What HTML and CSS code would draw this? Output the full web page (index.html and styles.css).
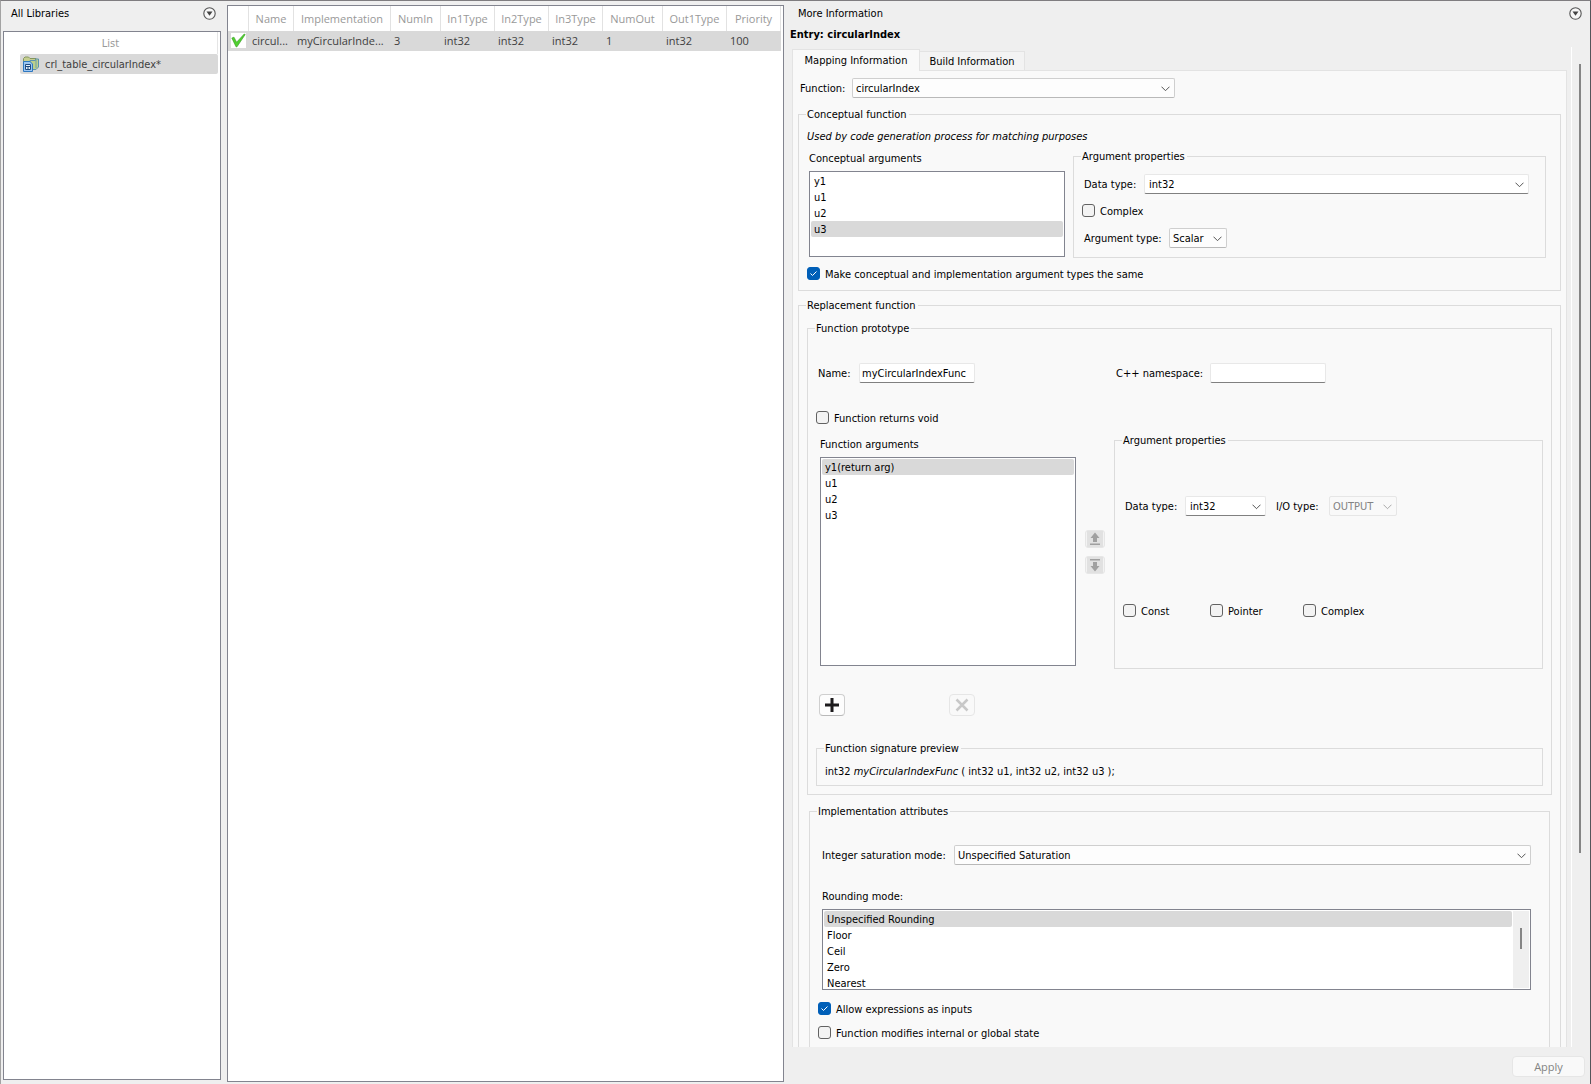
FILE: index.html
```html
<!DOCTYPE html>
<html lang="en">
<head>
<meta charset="utf-8">
<meta name="viewport" content="width=device-width, initial-scale=1">
<title>Code Replacement Tool</title>
<link rel="stylesheet" href="styles.css">
</head>
<body>
<div class="window">
  <section class="libraries">
    <header class="pane-title">
      <h2>All Libraries</h2>
      <button class="menu-button" type="button" aria-label="Libraries menu">
        <svg width="13" height="13" viewBox="0 0 13 13"><circle cx="6.5" cy="6.5" r="5.7" fill="#f7f7f7" stroke="#555" stroke-width="1.1"/><path d="M3.5 4.5h6L6.5 8.7z" fill="#444"/></svg>
      </button>
    </header>
    <div class="tree">
      <div class="tree-header">List</div>
      <div class="tree-item">
        <svg width="16" height="16" viewBox="0 0 16 16">
          <path d="M.5 6V2.500L2 1h3.500L7 2.500h6V12H6z" fill="#c6cf90" stroke="#84965e"/>
          <path d="M7 4.500h5.500V3h3v8l-2.500 2.500H8z" fill="#bcd08c" stroke="#5c93ad"/>
          <path d="M13 4v8" stroke="#6fa0a8"/>
          <path d="M.5 5.500h6.500L9.500 8v7.500H.5z" fill="#9cc6f2" stroke="#2f78c0"/>
          <path d="M2.500 8.500h5v5h-5zM2.500 10.500h5M5 10.500v3" fill="#e4effb" stroke="#1f4a80"/>
        </svg>
        <span>crl_table_circularIndex*</span>
      </div>
    </div>
  </section>

  <section class="entries">
    <table>
      <colgroup><col class="c-icon"><col class="c-name"><col class="c-impl"><col class="c-numin"><col class="c-type"><col class="c-type"><col class="c-type"><col class="c-out"><col class="c-out1"><col class="c-type"></colgroup>
      <thead><tr><th></th><th>Name</th><th>Implementation</th><th>NumIn</th><th>In1Type</th><th>In2Type</th><th>In3Type</th><th>NumOut</th><th>Out1Type</th><th>Priority</th></tr></thead>
      <tbody><tr>
        <td class="status"><svg width="15" height="15" viewBox="0 0 15 15"><rect width="15" height="15" fill="#fff"/><path d="M.8 5L3 4.200l2.600 5L13.200 1l1 .5L6 13.800H5z" fill="#4fd02f" stroke="#359a22" stroke-width=".6"/></svg></td>
        <td>circul...</td><td>myCircularInde...</td><td>3</td><td>int32</td><td>int32</td><td>int32</td><td>1</td><td>int32</td><td>100</td>
      </tr></tbody>
    </table>
  </section>

  <section class="details">
    <header class="pane-title">
      <h2>More Information</h2>
      <button class="menu-button" type="button" aria-label="Information menu">
        <svg width="13" height="13" viewBox="0 0 13 13"><circle cx="6.5" cy="6.5" r="5.7" fill="#f7f7f7" stroke="#555" stroke-width="1.1"/><path d="M3.5 4.5h6L6.5 8.7z" fill="#444"/></svg>
      </button>
    </header>
    <h1>Entry: circularIndex</h1>

    <div class="scroll">
      <div class="scroll-content">
        <div class="tabs" role="tablist">
          <button class="tab active" type="button" role="tab" aria-selected="true">Mapping Information</button>
          <button class="tab" type="button" role="tab" aria-selected="false">Build Information</button>
        </div>
        <form class="panel">
          <div class="row function-row">
            <label for="fn">Function:</label>
            <select id="fn"><option>circularIndex</option></select>
          </div>

          <fieldset class="conceptual">
            <legend>Conceptual function</legend>
            <p class="hint">Used by code generation process for matching purposes</p>
            <div class="concept-grid">
              <div class="list-column">
                <label for="cargs">Conceptual arguments</label>
                <select id="cargs" class="list" size="5"><option>y1</option><option>u1</option><option>u2</option><option selected>u3</option></select>
              </div>
              <fieldset class="concept-props">
                <legend>Argument properties</legend>
                <div class="row"><label class="w-type" for="cdt">Data type:</label><select id="cdt" class="editable grow"><option>int32</option></select></div>
                <label class="check"><input type="checkbox">Complex</label>
                <div class="row"><label class="w-arg" for="cat">Argument type:</label><select id="cat" class="scalar"><option>Scalar</option></select></div>
              </fieldset>
            </div>
            <label class="check"><input type="checkbox" checked>Make conceptual and implementation argument types the same</label>
          </fieldset>

          <fieldset class="replacement">
            <legend>Replacement function</legend>
            <fieldset class="prototype">
              <legend>Function prototype</legend>
              <div class="names">
                <div class="row"><label class="w-name" for="nm">Name:</label><input id="nm" type="text" value="myCircularIndexFunc"></div>
                <div class="row"><label class="w-ns" for="ns">C++ namespace:</label><input id="ns" type="text"></div>
              </div>
              <label class="check"><input type="checkbox">Function returns void</label>
              <div class="args">
                <div class="list-column">
                  <label for="fargs">Function arguments</label>
                  <select id="fargs" class="list" size="12"><option selected>y1(return arg)</option><option>u1</option><option>u2</option><option>u3</option></select>
                </div>
                <div class="movers">
                  <button type="button" disabled aria-label="Move up"><svg width="16" height="16" viewBox="0 0 16 16"><rect width="16" height="16" fill="#e1e1e1"/><path d="M8 1.500L12.500 7H10v4H6V7H3.500zM3 12.500h10v1.500H3z" fill="#a0a0a0"/></svg></button>
                  <button type="button" disabled aria-label="Move down"><svg width="16" height="16" viewBox="0 0 16 16"><rect width="16" height="16" fill="#e1e1e1"/><path d="M8 14.500L3.500 9H6V5h4v4h2.500zM3 2h10v1.500H3z" fill="#a0a0a0"/></svg></button>
                </div>
                <fieldset class="arg-props">
                  <legend>Argument properties</legend>
                  <div class="row"><label class="w-type" for="adt">Data type:</label><select id="adt" class="editable type"><option>int32</option></select><label class="w-io" for="aio">I/O type:</label><select id="aio" class="io" disabled><option>OUTPUT</option></select></div>
                  <div class="flags">
                    <label class="check"><input type="checkbox">Const</label>
                    <label class="check"><input type="checkbox">Pointer</label>
                    <label class="check"><input type="checkbox">Complex</label>
                  </div>
                </fieldset>
              </div>
              <div class="edit-buttons">
                <button type="button" aria-label="Add argument"><svg width="14" height="14" viewBox="0 0 14 14"><path d="M7 0v14M0 7h14" stroke="#1c1a1c" stroke-width="3"/></svg></button>
                <button type="button" disabled aria-label="Remove argument"><svg width="14" height="14" viewBox="0 0 14 14"><path d="M1.500 1.500l11 11M12.500 1.500l-11 11" stroke="#c8c8c8" stroke-width="2.500"/></svg></button>
              </div>
              <fieldset class="signature">
                <legend>Function signature preview</legend>
                <p>int32 <i>myCircularIndexFunc</i> ( int32 u1, int32 u2, int32 u3 );</p>
              </fieldset>
            </fieldset>

            <fieldset class="attributes">
              <legend>Implementation attributes</legend>
              <div class="row"><label class="w-sat" for="sat">Integer saturation mode:</label><select id="sat" class="grow"><option>Unspecified Saturation</option></select></div>
              <div class="rounding">
                <label for="rnd">Rounding mode:</label>
                <div class="list-frame">
                  <select id="rnd" class="list" size="5"><option selected>Unspecified Rounding</option><option>Floor</option><option>Ceil</option><option>Zero</option><option>Nearest</option></select>
                  <div class="list-scroll"><div class="list-thumb"></div></div>
                </div>
              </div>
              <label class="check"><input type="checkbox" checked>Allow expressions as inputs</label>
              <label class="check"><input type="checkbox">Function modifies internal or global state</label>
            </fieldset>
          </fieldset>
        </form>
      </div>
      <div class="scrollbar"><div class="thumb"></div></div>
    </div>
    <footer><button class="apply" type="button" disabled>Apply</button></footer>
  </section>
</div>
</body>
</html>
```
FILE: styles.css
```css
* { box-sizing: border-box; }
body {
  margin: 0;
  background: #efefef;
  color: #000;
  font: 11px/16px "DejaVu Sans Condensed", "Noto Sans", sans-serif;
}
h1, h2, p { margin: 0; font-size: 11px; }
h2 { padding-top: 2px; font-weight: normal; }
svg { display: block; }
button, input, select { font: inherit; color: inherit; margin: 0; }
.window {
  display: flex;
  height: 100vh;
  min-height: 600px;
  border-top: 1px solid #7f7d80;
  border-left: 1px solid #a3a3a3;
  border-right: 1px solid #55555a;
}

.pane-title { display: flex; align-items: center; justify-content: space-between; height: 24px; }
.menu-button { padding: 0; border: 0; background: none; }

/* Library tree */
.libraries { width: 220px; flex: none; display: flex; flex-direction: column; padding: 0 0 4px 2px; }
.libraries .pane-title { padding: 0 5px 0 8px; }
.tree { flex: 1; margin-top: 6px; border: 1px solid #82848f; background: #fff; }
.tree-header { height: 22px; line-height: 24px; text-align: center; color: #999; border-right: 1px solid #e5e5e5; margin-right: 2px; }
.tree-item { display: flex; align-items: center; gap: 6px; height: 20px; margin: 0 2px 0 16px; padding-left: 3px; background: #d9d9d9; border-radius: 2px; color: #404040; }
.tree-item span { padding-top: 2px; }

/* Entry table */
.entries { width: 557px; flex: none; margin: 4px 0 2px 6px; border: 1px solid #82848f; background: #fff; font: 11px/18px "Open Sans", sans-serif; }
.entries table { width: 553px; table-layout: fixed; border-collapse: separate; border-spacing: 0; }
.entries th { height: 25px; padding: 1px 0 0; font-weight: normal; color: #999; border-right: 1px solid #e2e2e2; }
.entries td { height: 20px; padding: 0 0 1px 3px; background: #d9d9d9; color: #404040; white-space: nowrap; }
.c-icon { width: 21px; }
.c-name { width: 45px; }
.c-impl { width: 97px; }
.c-numin { width: 50px; }
.c-type { width: 54px; }
.c-out { width: 60px; }
.c-out1 { width: 64px; }

/* Details pane */
.details { flex: 1; min-width: 0; display: flex; flex-direction: column; }
.details .pane-title { padding: 0 8px 0 14px; }
h1 { margin-top: 2px; padding-left: 6px; font-weight: bold; }
.scroll { flex: 1; min-height: 0; display: flex; margin-top: 4px; overflow: hidden; }
.scroll-content { flex: 1; min-width: 0; padding: 2px 4px 0 8px; border-right: 1px solid #fff; }
.scrollbar { width: 18px; padding: 17px 0 0 7px; }
.thumb { width: 2px; height: calc(80% + 3px); background: #858585; }
footer { display: flex; justify-content: flex-end; padding: 9px 5px 7px; }
.apply { width: 73px; height: 21px; padding: 0; border: 1px solid #e6e6e6; border-radius: 4px; background: #f9f9f9; color: #838383; font: 11px/19px "Open Sans", sans-serif; }

.tabs { display: flex; align-items: flex-end; height: 21px; }
.tab { min-width: 105px; height: 19px; padding: 2px 0 0; border: 1px solid #e3e3e3; border-left: 0; border-bottom: 0; background: #f3f3f3; line-height: 16px; }
.tab.active { min-width: 128px; height: 22px; margin-bottom: -1px; padding: 0; border-left: 1px solid #e3e3e3; background: #f9f9f9; z-index: 1; }
.panel { padding: 7px 5px 0; border: 1px solid #e3e3e3; background: #f9f9f9; }

fieldset { min-width: 0; margin: 0; padding: 0 8px; border: 1px solid #dcdcdc; }
legend { margin-left: -1px; padding: 1px 2px 0 1px; line-height: 13px; }
.row { display: flex; align-items: center; height: 20px; }
.row label { padding-top: 2px; }
.grow { flex: 1; min-width: 0; }
select, input[type="text"] { height: 20px; border: 1px solid #cfcfcf; border-bottom-color: #b9b9b9; border-radius: 2px; background: #fdfdfd; padding: 0 3px; outline: 0; }
select:not([size]) {
  appearance: none;
  padding-top: 2px;
  background: #fdfdfd url("data:image/svg+xml,%3Csvg xmlns='http://www.w3.org/2000/svg' width='9' height='6'%3E%3Cpath d='M.5.7l4 4 4-4' fill='none' stroke='%23555'/%3E%3C/svg%3E") no-repeat right 4px top 7px;
}
select.editable, input[type="text"] { background-color: #fff; border-color: #e8e8e8; border-bottom-color: #808080; }
select.editable { padding-left: 4px; }
input[type="text"] { width: 116px; padding: 0 2px; }
select.io:disabled {
  width: 68px; border-color: #e6e6e6; color: #838383; opacity: 1;
  background: #f9f9f9 url("data:image/svg+xml,%3Csvg xmlns='http://www.w3.org/2000/svg' width='9' height='6'%3E%3Cpath d='M.5.7l4 4 4-4' fill='none' stroke='%23aaa'/%3E%3C/svg%3E") no-repeat right 4px top 7px;
}
.scalar { width: 58px; }
.type { width: 81px; }

.list { display: block; width: 256px; height: auto; padding: 1px; border: 1px solid #82848f; border-radius: 0; background: #fff; overflow: hidden; }
.list option { min-height: 16px; padding: 2px 3px 1px; line-height: 13px; border-radius: 2px; color: #000; }
.list option:checked { color: #000; background: #d9d9d9 linear-gradient(#d9d9d9, #d9d9d9); }
.list-column { display: flex; flex-direction: column; gap: 4px; }
.list-column .list { flex: 1; min-height: 0; }

.check { display: flex; align-items: flex-start; gap: 5px; width: max-content; height: 14px; line-height: 16px; }
.check input { appearance: none; width: 13px; height: 13px; border: 1px solid #626262; border-radius: 3px; background: #f3f3f3; }
.check input:checked { border-color: #005fb8; background: #005fb8 url("data:image/svg+xml,%3Csvg xmlns='http://www.w3.org/2000/svg' width='11' height='11'%3E%3Cpath d='M2.500 5.500l2 2 4-4' fill='none' stroke='white'/%3E%3C/svg%3E") no-repeat center; }

.function-row { padding-left: 2px; }
.function-row label { width: 52px; }
.function-row select { width: 323px; }
.w-type { width: 60px; }
.w-arg { width: 85px; }
.w-name { width: 41px; }
.w-ns { width: 94px; }
.w-io { width: 53px; }
.w-sat { width: 132px; }

.conceptual { margin-top: 9px; padding-bottom: 9px; }
.hint { margin-top: 8px; font-style: italic; }
.concept-grid { display: grid; grid-template-columns: 256px 1fr; gap: 8px; margin: 4px 6px 9px 2px; }
.concept-grid .list-column { padding: 2px 0 1px; }
.concept-props { padding-bottom: 9px; }
.concept-props .row { padding: 0 8px 0 2px; }
.concept-props legend + .row { margin-top: 11px; }
.concept-props .check { margin: 10px 0; }

.replacement { margin-top: 7px; }
.prototype { margin-top: 9px; padding-bottom: 8px; }
.names { display: grid; grid-template-columns: 298px 1fr; margin: 28px 0; }
.names .row { padding-left: 2px; }
.args { display: grid; grid-template-columns: 260px 20px 1fr; column-gap: 9px; margin-top: 8px; }
.args .list-column { padding: 4px 0 3px 4px; }
.movers { display: flex; flex-direction: column; justify-content: center; gap: 8px; padding-top: 2px; }
.movers button { height: 18px; padding: 0 1px; border: 1px solid #e6e6e6; border-radius: 3px; background: #f3f3f3; }
.arg-props { padding-bottom: 50px; }
.arg-props .row { margin: 49px 0 88px; padding-left: 2px; }
.type + .w-io { margin-left: 10px; }
.flags { display: grid; grid-template-columns: 87px 93px 1fr; }
.edit-buttons { display: flex; gap: 104px; margin: 25px 0 25px 3px; }
.edit-buttons button { display: grid; place-items: center; width: 26px; height: 22px; padding: 0; border: 1px solid #cfcfcf; border-bottom-color: #b9b9b9; border-radius: 4px; background: #fdfdfd; }
.edit-buttons button:disabled { border-color: #e6e6e6; background: #f9f9f9; }
.signature { padding-bottom: 5px; }
.signature p { margin-top: 9px; }

.attributes { margin: 9px 2px 0; padding-bottom: 60px; }
.attributes .row { margin-top: 27px; padding: 0 10px 0 4px; }
.rounding { display: grid; gap: 4px; margin: 24px 10px 12px 4px; }
.list-frame { display: flex; height: 81px; border: 1px solid #82848f; background: #fff; }
.list-frame .list { flex: 1; height: 79px; border: 0; }
.list-scroll { width: 16px; margin: 1px 1px 1px 0; padding: 17px 0 0 7px; background: #efefef; }
.list-thumb { width: 2px; height: 21px; background: #858585; }
.attributes .check + .check { margin-top: 10px; }
```
